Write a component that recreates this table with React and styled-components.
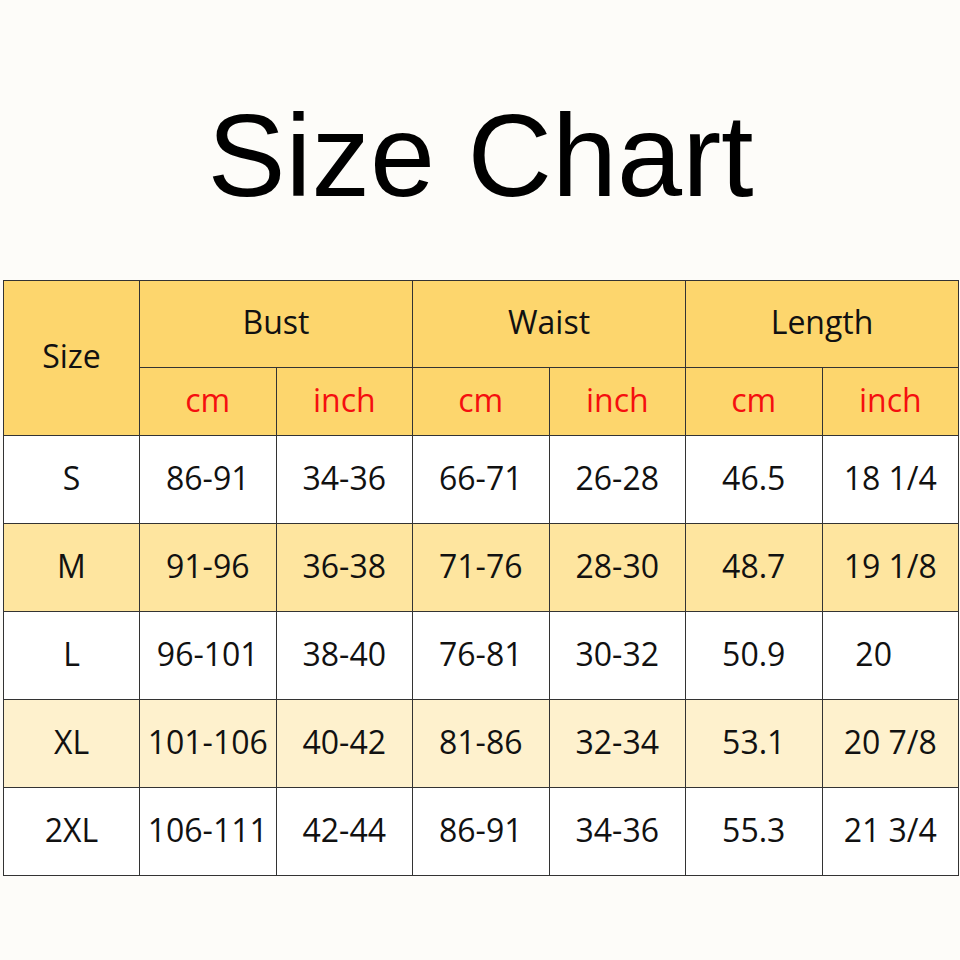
import React from 'react';
import styled, { createGlobalStyle } from 'styled-components';

const GlobalStyle = createGlobalStyle`
  html, body {
    margin: 0;
    padding: 0;
    background: #fdfcf9;
  }
`;

const Page = styled.div`
  width: 960px;
  height: 960px;
  background: #fdfcf9;
  display: flex;
  flex-direction: column;
  padding: 0 2px 0 3px;
  box-sizing: border-box;
`;

const Title = styled.h1`
  margin: 0;
  height: 280px;
  display: flex;
  align-items: center;
  justify-content: center;
  padding-top: 30px;
  box-sizing: border-box;
  font-family: "Liberation Sans", Arial, sans-serif;
  font-weight: normal;
  font-size: 117px;
  color: #000;
`;

const Table = styled.table`
  border-collapse: collapse;
  table-layout: fixed;
  width: 955px;
  font-family: "Open Sans", "Noto Sans", sans-serif;
  font-size: 32px;
  color: #111;
`;

const Col = styled.col`
  width: ${p => p.$w}px;
`;

const Cell = styled.td`
  border: 1.5px solid #333;
  padding: 0 0 5px;
  text-align: center;
  vertical-align: middle;
  height: 88px;
  background: ${p => p.$bg || '#ffffff'};
  color: #111;
  white-space: pre;
  box-sizing: border-box;
`;

const HeadCell = styled.th`
  border: 1.5px solid #333;
  padding: 0 0 5px;
  text-align: center;
  vertical-align: middle;
  font-weight: normal;
  height: ${p => p.$h}px;
  background: #fdd66d;
  color: ${p => (p.$unit ? '#f50f0f' : '#111')};
  box-sizing: border-box;
`;

const rowColors = ['#ffffff', '#fee59f', '#ffffff', '#fef1cd', '#ffffff'];

const rows = [
  ['S', '86-91', '34-36', '66-71', '26-28', '46.5', '18 1/4'],
  ['M', '91-96', '36-38', '71-76', '28-30', '48.7', '19 1/8'],
  ['L', '96-101', '38-40', '76-81', '30-32', '50.9', '20    '],
  ['XL', '101-106', '40-42', '81-86', '32-34', '53.1', '20 7/8'],
  ['2XL', '106-111', '42-44', '86-91', '34-36', '55.3', '21 3/4'],
];

const groups = ['Bust', 'Waist', 'Length'];

export default function App() {
  return (
    <>
      <GlobalStyle />
      <Page>
        <Title>Size Chart</Title>
        <Table>
          <colgroup>
            <Col $w={136} />
            {[0, 1, 2, 3, 4, 5].map(i => (
              <Col key={i} $w={136.5} />
            ))}
          </colgroup>
          <thead>
            <tr>
              <HeadCell rowSpan={2} $h={155}>Size</HeadCell>
              {groups.map(g => (
                <HeadCell key={g} colSpan={2} $h={87}>{g}</HeadCell>
              ))}
            </tr>
            <tr>
              {groups.map(g => (
                <React.Fragment key={g}>
                  <HeadCell $h={68} $unit>cm</HeadCell>
                  <HeadCell $h={68} $unit>inch</HeadCell>
                </React.Fragment>
              ))}
            </tr>
          </thead>
          <tbody>
            {rows.map((r, i) => (
              <tr key={r[0]}>
                {r.map((v, j) => (
                  <Cell key={j} $bg={rowColors[i]}>{v}</Cell>
                ))}
              </tr>
            ))}
          </tbody>
        </Table>
      </Page>
    </>
  );
}
